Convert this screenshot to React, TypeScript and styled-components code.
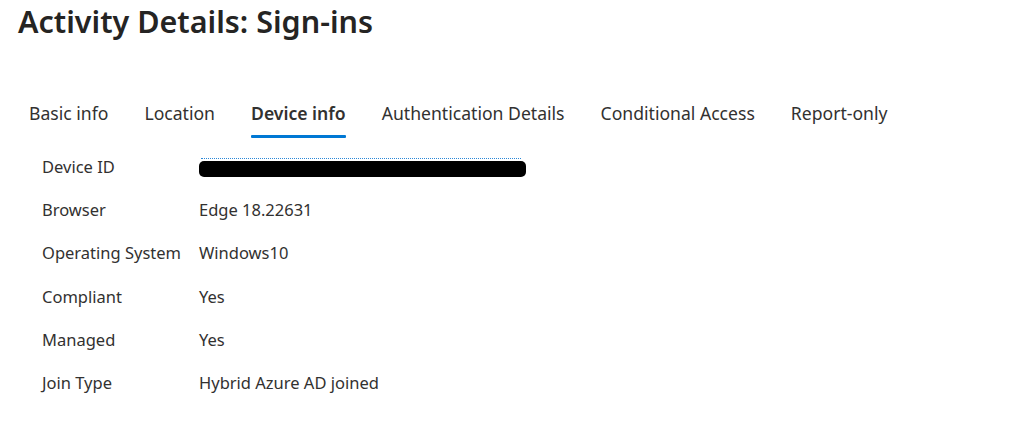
import { FC, Fragment } from "react";
import styled, { createGlobalStyle } from "styled-components";

const GlobalStyle = createGlobalStyle`
  html, body {
    margin: 0;
    padding: 0;
    background: #ffffff;
  }
  body {
    font-family: "Noto Sans", "Open Sans", sans-serif;
    color: #323130;
  }
`;

const Page = styled.div`
  width: 1012px;
  height: 421px;
  overflow: hidden;
  background: #ffffff;
`;

const Title = styled.h1`
  margin: 0;
  padding: 1px 0 0 18px;
  font-size: 30.5px;
  line-height: 40px;
  font-weight: 600;
  color: #252423;
`;

const TabBar = styled.nav`
  display: flex;
  align-items: flex-start;
  gap: 36px;
  margin-top: 60px;
  padding-left: 29px;
`;

const Tab = styled.div<{ active?: boolean }>`
  position: relative;
  font-size: 17.6px;
  line-height: 24px;
  padding-bottom: 13px;
  font-weight: ${({ active }) => (active ? 600 : 400)};
  color: #323130;
  white-space: nowrap;

  &::after {
    content: "";
    position: absolute;
    left: 0;
    right: 0;
    bottom: 0;
    height: 3px;
    border-radius: 1px;
    background: ${({ active }) => (active ? "#0078d4" : "transparent")};
  }
`;

const DetailList = styled.dl`
  display: grid;
  grid-template-columns: 157px auto;
  grid-auto-rows: 43.2px;
  align-items: center;
  margin: 7px 0 0 42px;
  font-size: 16.5px;
`;

const Label = styled.dt`
  margin: 0;
  color: #323130;
  white-space: nowrap;
`;

const Value = styled.dd`
  margin: 0;
  color: #323130;
  white-space: nowrap;
`;

const Redacted = styled.span`
  position: relative;
  display: inline-block;
  width: 327px;
  height: 16px;
  vertical-align: middle;
  background: #000000;
  border-radius: 5px;

  &::before {
    content: "";
    position: absolute;
    left: 2px;
    top: -3px;
    width: 320px;
    height: 3px;
    border-top: 1px dotted #2b88d8;
  }
`;

const tabs = [
  "Basic info",
  "Location",
  "Device info",
  "Authentication Details",
  "Conditional Access",
  "Report-only",
];

const details: { label: string; value?: string }[] = [
  { label: "Device ID" },
  { label: "Browser", value: "Edge 18.22631" },
  { label: "Operating System", value: "Windows10" },
  { label: "Compliant", value: "Yes" },
  { label: "Managed", value: "Yes" },
  { label: "Join Type", value: "Hybrid Azure AD joined" },
];

const App: FC = () => (
  <Page>
    <GlobalStyle />
    <Title>Activity Details: Sign-ins</Title>
    <TabBar>
      {tabs.map((tab) => (
        <Tab key={tab} active={tab === "Device info"}>
          {tab}
        </Tab>
      ))}
    </TabBar>
    <DetailList>
      {details.map(({ label, value }) => (
        <Fragment key={label}>
          <Label>{label}</Label>
          <Value>{value ?? <Redacted />}</Value>
        </Fragment>
      ))}
    </DetailList>
  </Page>
);

export default App;
